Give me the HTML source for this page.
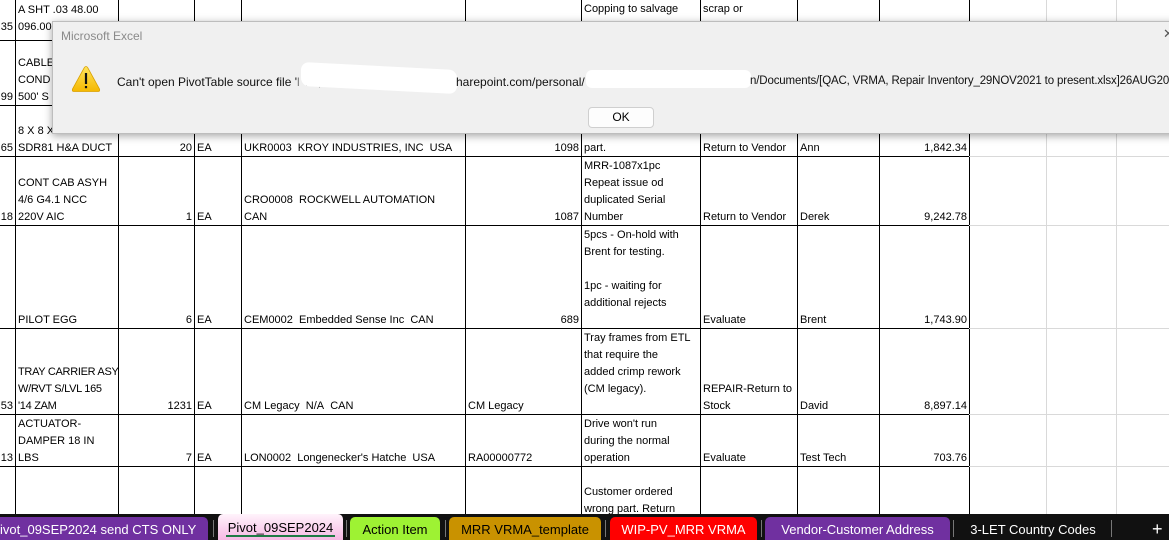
<!DOCTYPE html>
<html><head><meta charset="utf-8"><style>
*{margin:0;padding:0;box-sizing:border-box}
body{width:1169px;height:540px;overflow:hidden;background:#fff;position:relative;font-family:"Liberation Sans",Arial,sans-serif;font-size:11px;color:#000}
.v{position:absolute;top:0;height:514px;width:1px;background:#000}
.vg{position:absolute;top:0;height:514px;width:1px;background:#d9d9d9}
.h{position:absolute;left:0;width:969px;height:1px;background:#000}
.hg{position:absolute;left:969px;width:200px;height:1px;background:#d9d9d9}
.c{position:absolute;display:flex;flex-direction:column;justify-content:flex-end;line-height:17px;padding:0 2px 0 3px;white-space:nowrap;overflow:hidden;margin-top:1px}
.r{text-align:right}
.t{justify-content:flex-start}
.tab{position:absolute;top:517px;height:23px;border-radius:5px 5px 0 0;font-size:13px;line-height:26px;text-align:center;white-space:nowrap;overflow:hidden}
.sep{position:absolute;top:520px;width:1px;height:17px;background:#777}
</style></head><body>

<div class="v" style="left:15px"></div>
<div class="v" style="left:118px"></div>
<div class="v" style="left:194px"></div>
<div class="v" style="left:241px"></div>
<div class="v" style="left:465px"></div>
<div class="v" style="left:581px"></div>
<div class="v" style="left:700px"></div>
<div class="v" style="left:797px"></div>
<div class="v" style="left:879px"></div>
<div class="v" style="left:969px"></div>
<div class="vg" style="left:1046px"></div>
<div class="vg" style="left:1116px"></div>

<div class="h" style="top:40px"></div><div class="hg" style="top:40px"></div>
<div class="h" style="top:105px"></div><div class="hg" style="top:105px"></div>
<div class="h" style="top:156px"></div><div class="hg" style="top:156px"></div>
<div class="h" style="top:225px"></div><div class="hg" style="top:225px"></div>
<div class="h" style="top:328px"></div><div class="hg" style="top:328px"></div>
<div class="h" style="top:414px"></div><div class="hg" style="top:414px"></div>
<div class="h" style="top:466px"></div><div class="hg" style="top:466px"></div>

<div class="c r" style="left:-20px;width:35px;top:0;height:35px">35</div>
<div class="c" style="left:15px;width:103px;top:0;height:35px"><div>A SHT .03 48.00</div><div>096.00</div></div>
<div class="c t" style="left:581px;width:119px;top:0;height:40px"><div>Copping to salvage</div></div>
<div class="c t" style="left:700px;width:97px;top:0;height:40px"><div>scrap or</div></div>

<div class="c r" style="left:-20px;width:35px;top:41px;height:64px">99</div>
<div class="c" style="left:15px;width:103px;top:41px;height:64px"><div>CABLE</div><div>COND</div><div>500' S</div></div>

<div class="c r" style="left:-20px;width:35px;top:106px;height:50px">65</div>
<div class="c" style="left:15px;width:103px;top:106px;height:50px"><div>8 X 8 X</div><div>SDR81 H&amp;A DUCT</div></div>
<div class="c r" style="left:118px;width:76px;top:106px;height:50px">20</div>
<div class="c" style="left:194px;width:47px;top:106px;height:50px">EA</div>
<div class="c" style="left:241px;width:224px;top:106px;height:50px">UKR0003&nbsp; KROY INDUSTRIES, INC&nbsp; USA</div>
<div class="c r" style="left:465px;width:116px;top:106px;height:50px">1098</div>
<div class="c" style="left:581px;width:119px;top:106px;height:50px">part.</div>
<div class="c" style="left:700px;width:97px;top:106px;height:50px">Return to Vendor</div>
<div class="c" style="left:797px;width:82px;top:106px;height:50px">Ann</div>
<div class="c r" style="left:879px;width:90px;top:106px;height:50px">1,842.34</div>

<div class="c r" style="left:-20px;width:35px;top:157px;height:68px">18</div>
<div class="c" style="left:15px;width:103px;top:157px;height:68px"><div>CONT CAB ASYH</div><div>4/6 G4.1 NCC</div><div>220V AIC</div></div>
<div class="c r" style="left:118px;width:76px;top:157px;height:68px">1</div>
<div class="c" style="left:194px;width:47px;top:157px;height:68px">EA</div>
<div class="c" style="left:241px;width:224px;top:157px;height:68px"><div>CRO0008&nbsp; ROCKWELL AUTOMATION</div><div>CAN</div></div>
<div class="c r" style="left:465px;width:116px;top:157px;height:68px">1087</div>
<div class="c" style="left:581px;width:119px;top:157px;height:68px"><div>MRR-1087x1pc</div><div>Repeat issue od</div><div>duplicated Serial</div><div>Number</div></div>
<div class="c" style="left:700px;width:97px;top:157px;height:68px">Return to Vendor</div>
<div class="c" style="left:797px;width:82px;top:157px;height:68px">Derek</div>
<div class="c r" style="left:879px;width:90px;top:157px;height:68px">9,242.78</div>

<div class="c" style="left:15px;width:103px;top:226px;height:102px">PILOT EGG</div>
<div class="c r" style="left:118px;width:76px;top:226px;height:102px">6</div>
<div class="c" style="left:194px;width:47px;top:226px;height:102px">EA</div>
<div class="c" style="left:241px;width:224px;top:226px;height:102px">CEM0002&nbsp; Embedded Sense Inc&nbsp; CAN</div>
<div class="c r" style="left:465px;width:116px;top:226px;height:102px">689</div>
<div class="c t" style="left:581px;width:119px;top:226px;height:102px"><div>5pcs - On-hold with</div><div>Brent for testing.</div><div>&nbsp;</div><div>1pc - waiting for</div><div>additional rejects</div></div>
<div class="c" style="left:700px;width:97px;top:226px;height:102px">Evaluate</div>
<div class="c" style="left:797px;width:82px;top:226px;height:102px">Brent</div>
<div class="c r" style="left:879px;width:90px;top:226px;height:102px">1,743.90</div>

<div class="c r" style="left:-20px;width:35px;top:329px;height:85px">53</div>
<div class="c" style="left:15px;width:103px;top:329px;height:85px;letter-spacing:-0.3px"><div>TRAY CARRIER ASY</div><div>W/RVT S/LVL 165</div><div>'14 ZAM</div></div>
<div class="c r" style="left:118px;width:76px;top:329px;height:85px">1231</div>
<div class="c" style="left:194px;width:47px;top:329px;height:85px">EA</div>
<div class="c" style="left:241px;width:224px;top:329px;height:85px">CM Legacy&nbsp; N/A&nbsp; CAN</div>
<div class="c" style="left:465px;width:116px;top:329px;height:85px">CM Legacy</div>
<div class="c t" style="left:581px;width:119px;top:329px;height:85px"><div>Tray frames from ETL</div><div>that require the</div><div>added crimp rework</div><div>(CM legacy).</div></div>
<div class="c" style="left:700px;width:97px;top:329px;height:85px"><div>REPAIR-Return to</div><div>Stock</div></div>
<div class="c" style="left:797px;width:82px;top:329px;height:85px">David</div>
<div class="c r" style="left:879px;width:90px;top:329px;height:85px">8,897.14</div>

<div class="c r" style="left:-20px;width:35px;top:415px;height:51px">13</div>
<div class="c" style="left:15px;width:103px;top:415px;height:51px"><div>ACTUATOR-</div><div>DAMPER 18 IN</div><div>LBS</div></div>
<div class="c r" style="left:118px;width:76px;top:415px;height:51px">7</div>
<div class="c" style="left:194px;width:47px;top:415px;height:51px">EA</div>
<div class="c" style="left:241px;width:224px;top:415px;height:51px">LON0002&nbsp; Longenecker's Hatche&nbsp; USA</div>
<div class="c" style="left:465px;width:116px;top:415px;height:51px">RA00000772</div>
<div class="c" style="left:581px;width:119px;top:415px;height:51px"><div>Drive won't run</div><div>during the normal</div><div>operation</div></div>
<div class="c" style="left:700px;width:97px;top:415px;height:51px">Evaluate</div>
<div class="c" style="left:797px;width:82px;top:415px;height:51px">Test Tech</div>
<div class="c r" style="left:879px;width:90px;top:415px;height:51px">703.76</div>

<div class="c t" style="left:581px;width:119px;top:483px;height:31px"><div>Customer ordered</div><div>wrong part. Return</div></div>

<!-- dialog -->
<div style="position:absolute;left:52px;top:21px;width:1150px;height:113px;background:#f0f0f0;border:1px solid #bdbdbd;box-shadow:0 2px 8px rgba(0,0,0,.35);overflow:hidden">
  <div style="position:absolute;left:8px;top:7px;font-size:12px;color:#8a8a8a">Microsoft Excel</div>
  <div style="position:absolute;left:1110px;top:4px;font-size:13px;color:#555">✕</div>
  <svg style="position:absolute;left:18px;top:43px" width="30" height="28" viewBox="0 0 30 28">
    <defs><linearGradient id="g" x1="0" y1="0" x2="0" y2="1"><stop offset="0" stop-color="#ffe45c"/><stop offset="1" stop-color="#f5b800"/></linearGradient></defs>
    <path d="M15 1.5 Q16 1.5 16.8 2.8 L28.5 24 Q29.3 26.5 27 26.5 L3 26.5 Q0.7 26.5 1.5 24 L13.2 2.8 Q14 1.5 15 1.5Z" fill="url(#g)" stroke="#d9a000" stroke-width="0.8"/>
    <rect x="13.9" y="8" width="2.2" height="11" fill="#111"/>
    <rect x="13.9" y="21" width="2.2" height="2.2" fill="#111"/>
  </svg>
  <div style="position:absolute;left:64px;top:53px;font-size:12px;white-space:nowrap;color:#111">Can't open PivotTable source file '<span style="letter-spacing:1px;color:#777">l .. ;</span></div>
  <div style="position:absolute;left:248px;top:44px;width:156px;height:24px;background:#fff;border-radius:8px;transform:skewY(3deg)"></div>
  <div style="position:absolute;left:403px;top:53px;font-size:12px;white-space:nowrap;color:#111">harepoint.com/personal/</div>
  <div style="position:absolute;left:533px;top:48px;width:165px;height:18px;background:#fff;border-radius:6px"></div>
  <div style="position:absolute;left:697px;top:53px;font-size:11.5px;letter-spacing:-0.15px;white-space:nowrap;color:#111">n/Documents/[QAC, VRMA, Repair Inventory_29NOV2021 to present.xlsx]26AUG2024</div>
  <div style="position:absolute;left:535px;top:85px;width:66px;height:21px;background:#fdfdfd;border:1px solid #cfcfcf;border-radius:4px;font-size:12px;text-align:center;line-height:19px">OK</div>
</div>

<!-- tabs -->
<div style="position:absolute;left:0;top:514px;width:1169px;height:26px;background:#111"></div>
<div class="tab" style="left:0;width:208px;background:#7030a0;color:#fff;text-align:left;border-radius:0 5px 0 0">ivot_09SEP2024 send CTS ONLY</div>
<div class="sep" style="left:213px"></div>
<div class="tab" style="left:218px;top:514px;height:26px;width:125px;background:linear-gradient(#fff3fb,#f6b8e4);color:#000;line-height:28px">Pivot_09SEP2024
  <div style="position:absolute;left:8px;right:8px;bottom:3px;height:2px;background:#1e7b45"></div></div>
<div class="sep" style="left:346px"></div>
<div class="tab" style="left:350px;width:90px;background:#9ef233;color:#000">Action Item</div>
<div class="sep" style="left:445px"></div>
<div class="tab" style="left:449px;width:152px;background:#c99200;color:#000">MRR VRMA_template</div>
<div class="sep" style="left:605px"></div>
<div class="tab" style="left:610px;width:147px;background:#ff0000;color:#fff">WIP-PV_MRR VRMA</div>
<div class="sep" style="left:761px"></div>
<div class="tab" style="left:765px;width:185px;background:#7030a0;color:#fff">Vendor-Customer Address</div>
<div class="sep" style="left:953px"></div>
<div class="tab" style="left:958px;width:150px;background:#111;color:#fff">3-LET Country Codes</div>
<div class="sep" style="left:1111px"></div>
<div style="position:absolute;left:1152px;top:516px;color:#fff;font-size:18px;line-height:26px">+</div>
</body></html>
